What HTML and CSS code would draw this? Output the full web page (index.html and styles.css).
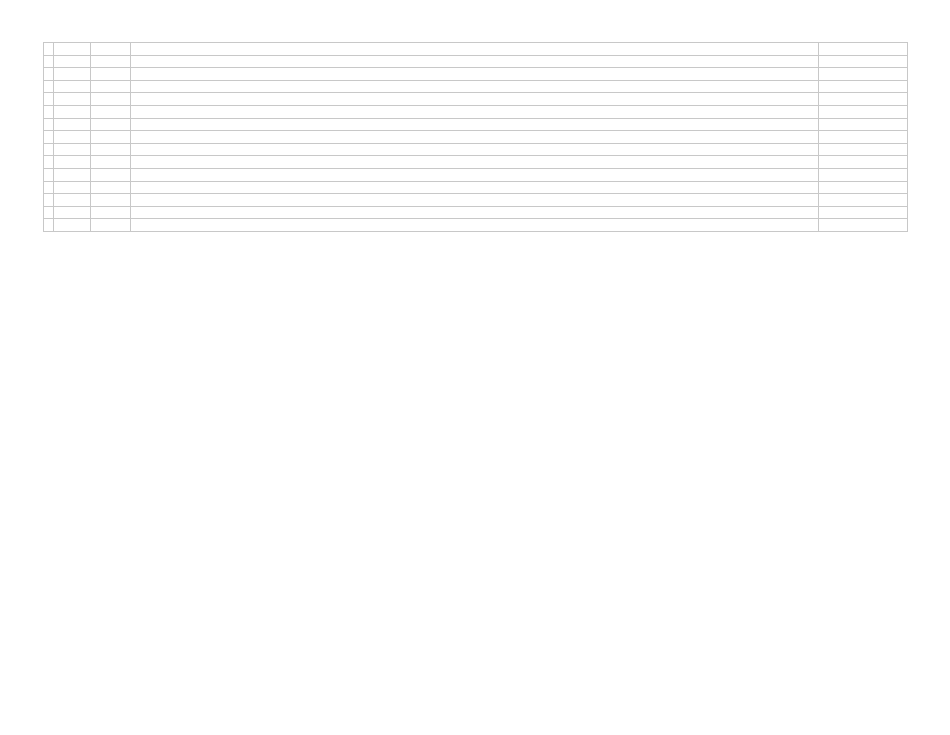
FILE: index.html
```html
<!DOCTYPE html>
<html>
<head>
<meta charset="utf-8">
<link rel="stylesheet" href="styles.css">
</head>
<body>
<div class="page">
<table class="grid">
<colgroup>
<col class="c1"><col class="c2"><col class="c3"><col class="c4"><col class="c5">
</colgroup>
<tbody>
<tr><td></td><td></td><td></td><td></td><td></td></tr>
<tr><td></td><td></td><td></td><td></td><td></td></tr>
<tr><td></td><td></td><td></td><td></td><td></td></tr>
<tr><td></td><td></td><td></td><td></td><td></td></tr>
<tr><td></td><td></td><td></td><td></td><td></td></tr>
<tr><td></td><td></td><td></td><td></td><td></td></tr>
<tr><td></td><td></td><td></td><td></td><td></td></tr>
<tr><td></td><td></td><td></td><td></td><td></td></tr>
<tr><td></td><td></td><td></td><td></td><td></td></tr>
<tr><td></td><td></td><td></td><td></td><td></td></tr>
<tr><td></td><td></td><td></td><td></td><td></td></tr>
<tr><td></td><td></td><td></td><td></td><td></td></tr>
<tr><td></td><td></td><td></td><td></td><td></td></tr>
<tr><td></td><td></td><td></td><td></td><td></td></tr>
<tr><td></td><td></td><td></td><td></td><td></td></tr>
</tbody>
</table>
</div>
</body>
</html>
```
FILE: styles.css
```css
html, body {
  margin: 0;
  padding: 0;
  background: #ffffff;
  font-family: "Liberation Sans", Arial, sans-serif;
}
.page {
  padding: 42px 42px 0 43px;
}
.grid {
  width: 864px;
  border-collapse: collapse;
  table-layout: fixed;
}
.grid td {
  border: 1px solid #c8c8c8;
  height: 11.6px;
  padding: 0;
}
.grid tr {
  height: 11.6px;
}
.c1 { width: 10px; }
.c2 { width: 37px; }
.c3 { width: 40px; }
.c4 { width: 688px; }
.c5 { width: 89px; }
```
